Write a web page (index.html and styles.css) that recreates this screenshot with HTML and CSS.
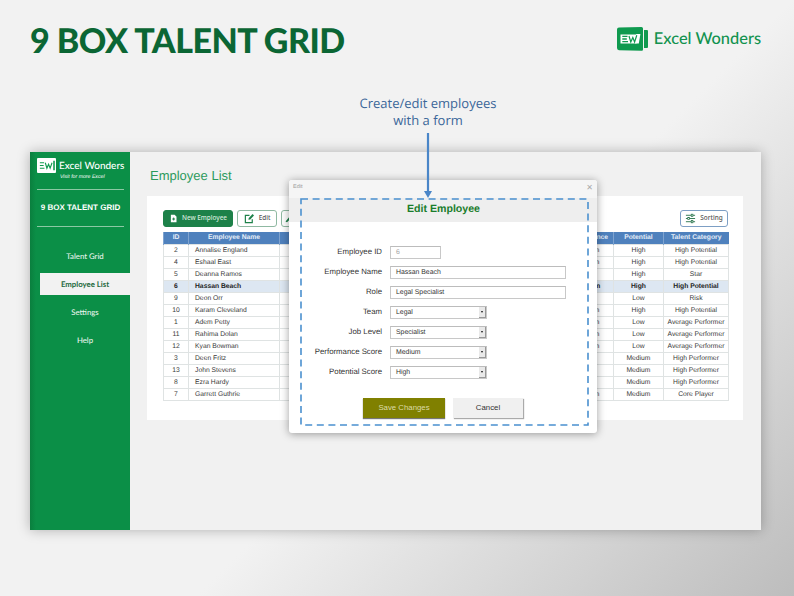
FILE: index.html
```html
<!DOCTYPE html>
<html lang="en">
<head>
<meta charset="utf-8">
<title>9 Box Talent Grid</title>
<link rel="stylesheet" href="styles.css">
</head>
<body>
<svg class="defs" width="0" height="0" aria-hidden="true">
  <defs>
    <symbol id="ew" viewBox="0 0 31 24">
      <path d="M2 0.6 L24.5 0 Q26 0 26 1.5 L26 22.5 Q26 24 24.5 23.8 L2 23.2 Q0 23 0 21 L0 2.6 Q0 0.7 2 0.6Z" fill="#0f9a4f"/>
      <path d="M27 3 L30 3 Q31 3 31 4 L31 20 Q31 21 30 21 L27 21Z" fill="#0f9a4f"/>
      <path d="M3.5 7.5H19.5V16.5H3.5Z" fill="#fff"/>
      <path d="M5.3 9.4H10.5M5.3 12H9.8M5.3 14.6H11" fill="none" stroke="#0f9a4f" stroke-width="1.3"/>
      <path d="M19.2 7H23.4L21.8 16.5H18.2Z" fill="#fff"/>
      <path d="M12 9L13.8 15L15.8 10.5L17.6 15L19.8 8.2" fill="none" stroke="#0f9a4f" stroke-width="1.2"/>
    </symbol>
  </defs>
</svg>

<header class="top">
  <h1 class="title">9 BOX TALENT GRID</h1>
  <div class="brand">
    <svg class="brand-logo"><use href="#ew"/></svg>
    <span class="brand-name">Excel Wonders</span>
  </div>
</header>

<p class="callout">Create/edit employees<br>with a form</p>

<section class="window">
  <aside class="sidebar">
    <div class="side-brand">
      <span class="side-badge"><svg class="side-logo" viewBox="0 0 24 16"><path d="M3.6 4.5H9M3.6 8H8.4M3.6 11.5H9.4M10.5 4.5L12.5 11.5L14.6 6.5L16.6 11.5L19 4.5" fill="none" stroke="#0f9a4f" stroke-width="1.4"/><rect x="20.5" y="2" width="2" height="12" fill="#0f9a4f"/></svg></span>
      <div class="side-words">
        <div class="side-name">Excel Wonders</div>
        <div class="side-visit">Visit for more Excel</div>
      </div>
    </div>
    <div class="side-app">9 BOX TALENT GRID</div>
    <nav class="nav">
      <a class="nav-item">Talent Grid</a>
      <a class="nav-item nav-active">Employee List</a>
      <a class="nav-item">Settings</a>
      <a class="nav-item">Help</a>
    </nav>
  </aside>

  <main class="main">
    <h2 class="page-title">Employee List</h2>
    <div class="card">
      <div class="toolbar">
        <button class="btn btn-primary">
          <svg class="ico" viewBox="0 0 12 12"><path d="M2.5 1H7.5L10 3.5V11H2.5Z" fill="#fff"/><path d="M6.2 4.8V8.6M4.3 6.7H8.1" stroke="#1d8149" stroke-width="1.3"/></svg>
          New Employee
        </button>
        <button class="btn btn-edit">
          <svg class="ico ico-lg" viewBox="0 0 12 12"><path d="M9 6.8V10.5H1.5V2.5H6" fill="none" stroke="#1d8149" stroke-width="1.3"/><path d="M4.8 7.4L5.2 5.4L9.4 1.2L10.9 2.7L6.8 7Z" fill="#1d8149"/></svg>
          Edit
        </button>
        <button class="btn btn-hidden">
          <svg class="ico" viewBox="0 0 12 12"><path d="M2 10L7 4L9 6L4 11ZM8 1L11 4L9.6 5L7 2.4Z" fill="#1d8149"/></svg>
        </button>
        <button class="btn btn-sort">
          <svg class="ico ico-lg" viewBox="0 0 12 12"><path d="M1 2.5H11M1 6H11M1 9.5H11" stroke="#27734a" stroke-width="1"/><rect x="6.8" y="1.3" width="1.8" height="2.4" fill="#fff" stroke="#27734a" stroke-width=".8"/><rect x="3" y="4.8" width="1.8" height="2.4" fill="#fff" stroke="#27734a" stroke-width=".8"/><rect x="6.8" y="8.3" width="1.8" height="2.4" fill="#fff" stroke="#27734a" stroke-width=".8"/></svg>
          Sorting
        </button>
      </div>
      <table class="grid">
        <colgroup>
          <col class="c-id"><col class="c-name"><col class="c-role"><col class="c-team"><col class="c-level"><col class="c-perf"><col class="c-pot"><col class="c-cat">
        </colgroup>
        <thead>
          <tr><th>ID</th><th>Employee Name</th><th>Role</th><th>Team</th><th>Job Level</th><th>Performance</th><th>Potential</th><th>Talent Category</th></tr>
        </thead>
        <tbody>
          <tr><td>2</td><td class="left">Annalise England</td><td></td><td></td><td></td><td>Medium</td><td>High</td><td>High Potential</td></tr>
          <tr><td>4</td><td class="left">Eshaal East</td><td></td><td></td><td></td><td>Medium</td><td>High</td><td>High Potential</td></tr>
          <tr><td>5</td><td class="left">Deanna Ramos</td><td></td><td></td><td></td><td>High</td><td>High</td><td>Star</td></tr>
          <tr class="selected"><td>6</td><td class="left">Hassan Beach</td><td></td><td></td><td></td><td>Medium</td><td>High</td><td>High Potential</td></tr>
          <tr><td>9</td><td class="left">Deon Orr</td><td></td><td></td><td></td><td>Low</td><td>Low</td><td>Risk</td></tr>
          <tr><td>10</td><td class="left">Karam Cleveland</td><td></td><td></td><td></td><td>Medium</td><td>High</td><td>High Potential</td></tr>
          <tr><td>1</td><td class="left">Adem Petty</td><td></td><td></td><td></td><td>Medium</td><td>Low</td><td>Average Performer</td></tr>
          <tr><td>11</td><td class="left">Rahima Dolan</td><td></td><td></td><td></td><td>Medium</td><td>Low</td><td>Average Performer</td></tr>
          <tr><td>12</td><td class="left">Kyan Bowman</td><td></td><td></td><td></td><td>Medium</td><td>Low</td><td>Average Performer</td></tr>
          <tr><td>3</td><td class="left">Deen Fritz</td><td></td><td></td><td></td><td>High</td><td>Medium</td><td>High Performer</td></tr>
          <tr><td>13</td><td class="left">John Stevens</td><td></td><td></td><td></td><td>High</td><td>Medium</td><td>High Performer</td></tr>
          <tr><td>8</td><td class="left">Ezra Hardy</td><td></td><td></td><td></td><td>High</td><td>Medium</td><td>High Performer</td></tr>
          <tr><td>7</td><td class="left">Garrett Guthrie</td><td></td><td></td><td></td><td>Medium</td><td>Medium</td><td>Core Player</td></tr>
        </tbody>
      </table>
    </div>
  </main>

  <div class="dialog">
    <div class="dialog-bar"><span>Edit</span><span class="dialog-x">✕</span></div>
    <div class="dialog-head">Edit Employee</div>
    <form class="form">
      <label class="lbl">Employee ID</label><div class="field field-id">6</div>
      <label class="lbl">Employee Name</label><div class="field field-wide">Hassan Beach</div>
      <label class="lbl">Role</label><div class="field field-wide">Legal Specialist</div>
      <label class="lbl">Team</label><div class="field field-sel">Legal<span class="drop"></span></div>
      <label class="lbl">Job Level</label><div class="field field-sel">Specialist<span class="drop"></span></div>
      <label class="lbl">Performance Score</label><div class="field field-sel">Medium<span class="drop"></span></div>
      <label class="lbl">Potential Score</label><div class="field field-sel">High<span class="drop"></span></div>
    </form>
    <div class="dialog-actions">
      <button class="act act-save" type="button">Save Changes</button>
      <button class="act act-cancel" type="button">Cancel</button>
    </div>
    <svg class="dash" viewBox="0 0 289 228"><rect x="1" y="1" width="287" height="226" fill="none" stroke="#4a90cf" stroke-width="1.6" stroke-dasharray="7 4.6"/></svg>
  </div>

  <svg class="arrow" viewBox="0 0 10 66"><path d="M5 0V60" stroke="#4a86c8" stroke-width="2.2"/><path d="M1 58H9L5 65Z" fill="#4a86c8"/></svg>
</section>
</body>
</html>
```
FILE: styles.css
```css
* { box-sizing: border-box; }
html, body { margin: 0; padding: 0; }
body {
  width: 794px;
  height: 596px;
  overflow: hidden;
  font-family: "Liberation Sans", Arial, sans-serif;
  text-rendering: geometricPrecision;
  background: linear-gradient(135deg, #f2f2f2 0%, #f2f2f2 57%, #bdbdbd 100%);
}
.defs { position: absolute; }

.top {
  display: flex;
  justify-content: space-between;
  align-items: flex-start;
  height: 95px;
  padding: 21px 33px 0 30px;
}
.title {
  margin: 0;
  font: 900 34px/40px Lato, sans-serif;
  letter-spacing: -0.5px;
  white-space: nowrap;
  color: #0b6634;
}
.brand { display: flex; align-items: center; gap: 6px; margin-top: 5px; }
.brand-logo { width: 31px; height: 24px; }
.brand-name { padding-top: 1px; font: 500 16.4px/24px Lato, sans-serif; white-space: nowrap; color: #12924f; }

.callout {
  margin: 0 0 0 328px;
  width: 200px;
  height: 57px;
  text-align: center;
  font: 13px/17px "Open Sans", sans-serif;
  color: #3a6699;
}

.window {
  position: relative;
  display: flex;
  width: 731px;
  height: 378px;
  margin-left: 30px;
  background: #f1f1f1;
  box-shadow: 0 0 12px rgba(0, 0, 0, .28);
}

.sidebar {
  flex: 0 0 100px;
  width: 100px;
  min-width: 0;
  display: flex;
  flex-direction: column;
  background: linear-gradient(90deg, #0a7f3e, #0b8f47 6px);
  color: #fff;
}
.side-brand {
  display: flex;
  gap: 3px;
  height: 38px;
  margin: 0 6px 0 7px;
  padding-top: 6px;
  border-bottom: 1px solid #8cc8a4;
}
.side-badge {
  flex: 0 0 19px;
  height: 15px;
  background: #fff;
  border-radius: 1px;
}
.side-logo { display: block; width: 19px; height: 15px; }
.side-words { padding-top: 2px; }
.side-name { font: 500 10px/13px Lato, sans-serif; white-space: nowrap; }
.side-visit { margin-top: 1px; font: italic 5.2px/7px "Liberation Sans", sans-serif; padding-left: 1px; white-space: nowrap; }
.side-app {
  height: 37px;
  margin: 0 6px 0 7px;
  border-bottom: 1px solid #8cc8a4;
  font: 700 8px/36px "Liberation Sans", sans-serif;
  text-align: center;
  white-space: nowrap;
}
.nav {
  display: flex;
  flex-direction: column;
  gap: 6px;
  margin-top: 18px;
  padding-left: 10px;
}
.nav-item {
  height: 22px;
  font: 500 7.8px/22px Lato, sans-serif;
  text-align: center;
  color: #e8f4ec;
}
.nav-active { background: #f2f2f2; color: #1f6a3f; font-weight: 700; }

.main { flex: 1; min-width: 0; padding: 0 18px 0 17px; }
.page-title {
  margin: 0;
  height: 44px;
  padding: 15px 0 0 3px;
  font: 400 13px/18px "Liberation Sans", sans-serif;
  color: #2c9a5c;
}
.card {
  height: 224px;
  padding: 14px 15px 0 16px;
  background: #fff;
}

.toolbar { display: flex; gap: 4px; height: 17px; margin-bottom: 5px; }
.btn {
  display: flex;
  align-items: center;
  justify-content: center;
  gap: 4px;
  height: 17px;
  padding: 0;
  border: 1px solid #8fb9a2;
  border-radius: 3px;
  background: #fff;
  font: 500 6.4px/1 "Noto Sans", sans-serif;
  color: #555;
}
.btn-primary { width: 70px; background: #1d8149; border-color: #1d8149; color: #d8ecdf; }
.btn-edit { width: 40px; color: #555; }
.btn-hidden { width: 60px; justify-content: flex-start; padding-left: 2px; }
.btn-sort { width: 48px; margin-left: auto; border-color: #7d9fc4; }
.ico { width: 9px; height: 9px; }
.ico-lg { width: 11px; height: 11px; }

.grid {
  width: 565px;
  table-layout: fixed;
  border-collapse: collapse;
  font-size: 6.75px;
  color: #3a3a3a;
}
.c-id { width: 25px; }
.c-name { width: 91px; }
.c-role { width: 112px; }
.c-team { width: 85px; }
.c-level { width: 85px; }
.c-perf { width: 52px; }
.c-pot { width: 50px; }
.c-cat { width: 65px; }
.grid th, .grid td {
  height: 12px;
  padding: 1px 0 0;
  line-height: 10px;
  text-align: center;
  white-space: nowrap;
  overflow: hidden;
}
.grid th {
  background: #4f81bd;
  color: #e6eef8;
  font-weight: 700;
  border-left: 1px solid #7fa3cf;
}
.grid td { border: 1px solid #dfe3e3; }
.grid td.left { text-align: left; padding-left: 6px; }
.selected td { background: #dde7f2; font-weight: 700; color: #222; }

.dialog {
  position: absolute;
  left: 259px;
  top: 28px;
  width: 308px;
  height: 253px;
  display: flex;
  flex-direction: column;
  background: #fff;
  border-radius: 3px;
  box-shadow: 0 1px 8px rgba(0, 0, 0, .38);
  overflow: hidden;
}
.dialog-bar {
  display: flex;
  justify-content: space-between;
  align-items: center;
  height: 18px;
  padding: 0 4px 4px 4px;
  background: #f5f5f5;
  font-size: 5.5px;
  color: #9a9a9a;
}
.dialog-x { font-size: 8px; color: #aaa; }
.dialog-head {
  height: 24px;
  padding-left: 1px;
  background: #eeeeee;
  font: 700 10.6px/23px "Liberation Sans", sans-serif;
  text-align: center;
  color: #1a7d2b;
}
.form {
  display: grid;
  grid-template-columns: 93px auto;
  justify-content: start;
  justify-items: start;
  align-items: center;
  column-gap: 8px;
  row-gap: 7px;
  margin-top: 24px;
}
.lbl {
  justify-self: end;
  margin-top: -2px;
  font-size: 7.8px;
  line-height: 12px;
  color: #333;
  white-space: nowrap;
}
.field {
  position: relative;
  height: 13px;
  padding-left: 5px;
  border: 1px solid #c8c8c8;
  border-top-color: #bcbcbc;
  background: #fff;
  font-size: 6.9px;
  line-height: 11px;
  color: #333;
}
.field-id { width: 51px; color: #a8a8a8; }
.field-wide { width: 176px; }
.field-sel { width: 97px; }
.drop {
  position: absolute;
  right: 0;
  top: 0;
  width: 7px;
  height: 11px;
  background: #e9e9e9;
  border-right: 1px solid #999;
  border-bottom: 1px solid #999;
}
.drop::after {
  content: "";
  position: absolute;
  left: 1.5px;
  top: 4px;
  border: 1.5px solid transparent;
  border-top: 2px solid #111;
  border-bottom: 0;
}
.dialog-actions { display: flex; gap: 8px; margin: 19px 0 0 74px; }
.act {
  height: 20px;
  padding: 0;
  border: 0;
  font: 7.8px/20px "Liberation Sans", sans-serif;
}
.act-save { width: 82px; background: #808000; color: #dcdca8; box-shadow: 0 1px 1px #777; }
.act-cancel { width: 70px; background: #f0f0f0; color: #333; box-shadow: 1px 1px 1px #aaa; }
.dash { position: absolute; left: 11px; top: 18px; width: 289px; height: 228px; }

.arrow { position: absolute; left: 393px; top: -19px; width: 10px; height: 66px; }
```
